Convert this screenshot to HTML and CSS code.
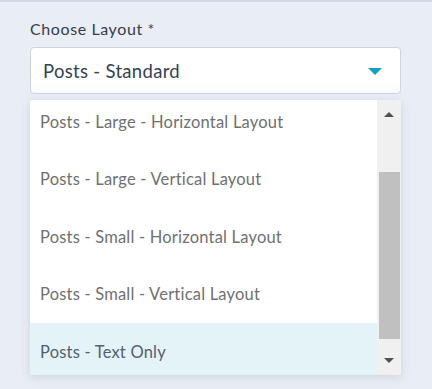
FILE: index.html
```html
<!DOCTYPE html>
<html lang="en">
<head>
	<meta charset="UTF-8">
	<link rel="stylesheet" href="styles.css">
	<title>Choose Layout</title>
</head>
<body>

<div id="wrapper">
	<label class="field_label">Choose Layout *</label>

	<div class="select_box">
		<span class="select_value">Posts - Standard</span>
		<span class="caret"></span>
	</div>

	<div class="dropdown">
		<ul class="options">
			<li>Posts - Large - Horizontal Layout</li>
			<li>Posts - Large - Vertical Layout</li>
			<li>Posts - Small - Horizontal Layout</li>
			<li>Posts - Small - Vertical Layout</li>
			<li class="active">Posts - Text Only</li>
		</ul>

		<div class="scrollbar">
			<span class="arrow_up"></span>
			<div class="track">
				<div class="thumb"></div>
			</div>
			<span class="arrow_down"></span>
		</div>
	</div><!-- end of dropdown -->
</div><!-- end of wrapper -->

</body>
</html>
```

FILE: styles.css
```css
html, body {
	margin: 0;
	height: 100%;
}

body {
	background-color: rgb(233, 237, 245);
	border-top: 2px solid rgb(211, 217, 228);
	box-sizing: border-box;
	font-family: Lato, "Open Sans", sans-serif;
}

#wrapper {
	width: 371px;
	padding: 16px 0 0 30px;
}

.field_label {
	display: block;
	font-size: 16px;
	letter-spacing: .6px;
	line-height: 21px;
	color: rgb(52, 62, 76);
	margin-bottom: 8px;
}

.select_box {
	height: 45px;
	display: flex;
	align-items: center;
	justify-content: space-between;
	padding: 0 18px 0 12px;
	background: linear-gradient(rgb(255, 255, 255) 80%, rgb(248, 249, 251));
	border: 1px solid rgb(206, 213, 224);
	border-radius: 4px;
}

	.select_value {
		font-size: 18.5px;
		letter-spacing: .3px;
		color: rgb(52, 66, 84);
	}

	.caret {
		width: 0;
		height: 0;
		border-left: 7px solid transparent;
		border-right: 7px solid transparent;
		border-top: 7px solid rgb(20, 160, 190);
		margin-top: 2px;
	}

.dropdown {
	margin-top: 6px;
	height: 275px;
	display: flex;
	background-color: #fff;
	border-radius: 3px;
	overflow: hidden;
	box-shadow: 0 2px 10px rgba(120, 135, 160, .25);
}

.options {
	flex: 1;
	margin: -7px 0 0 0;
	padding: 0;
	list-style-type: none;
}

	.options li {
		height: 57.5px;
		display: flex;
		align-items: center;
		padding-left: 10px;
		font-size: 16.5px;
		letter-spacing: .2px;
		color: rgb(112, 112, 112);
	}

	.options li.active {
		background-color: rgb(228, 243, 248);
		color: rgb(84, 96, 112);
	}

.scrollbar {
	width: 24px;
	display: flex;
	flex-direction: column;
	align-items: center;
	background-color: rgb(240, 240, 240);
}

	.arrow_up, .arrow_down {
		width: 0;
		height: 0;
		border-left: 5px solid transparent;
		border-right: 5px solid transparent;
	}

	.arrow_up {
		margin: 12px 0 0 0;
		border-bottom: 5px solid rgb(80, 80, 80);
	}

	.arrow_down {
		margin: 0 0 12px 0;
		border-top: 5px solid rgb(80, 80, 80);
	}

	.track {
		flex: 1;
		width: 100%;
		padding-top: 55px;
	}

	.thumb {
		height: 167px;
		margin: 0 1px 0 2px;
		background-color: rgb(192, 192, 192);
	}
```
